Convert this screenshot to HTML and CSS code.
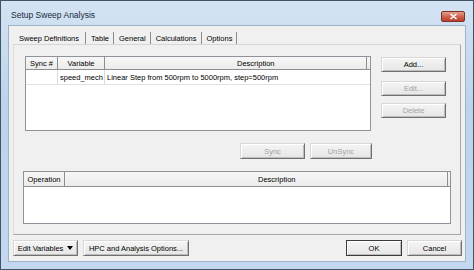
FILE: index.html
```html
<!DOCTYPE html>
<html lang="en">
<head>
  <meta charset="UTF-8" />
  <title>Setup Sweep Analysis</title>
  <link rel="stylesheet" href="styles.css">
</head>
<body>
  <div class="window">
    <div class="titlebar">
      <span class="title">Setup Sweep Analysis</span>
      <span class="close">
        <svg width="9" height="7" viewBox="0 0 9 7">
          <path d="M1.5 1 L7.5 6 M7.5 1 L1.5 6" stroke="#fff" stroke-width="1.6" />
        </svg>
      </span>
    </div>

    <div class="client">
      <div class="tabs">
        <span class="tab active">Sweep Definitions</span>
        <span class="tab">Table</span>
        <span class="tab">General</span>
        <span class="tab">Calculations</span>
        <span class="tab">Options</span>
      </div>

      <div class="panel">
        <div class="upper">
          <div class="upper-left">
            <div class="list sweeps">
              <div class="row head">
                <span class="cell c-sync">Sync #</span>
                <span class="cell c-var">Variable</span>
                <span class="cell c-desc">Description</span>
                <span class="cell c-stub"></span>
              </div>
              <div class="row">
                <span class="cell c-sync"></span>
                <span class="cell c-var">speed_mech</span>
                <span class="cell c-desc">Linear Step from 500rpm to 5000rpm, step=500rpm</span>
              </div>
            </div>
            <div class="sync-row">
              <button class="btn sync" disabled>Sync</button>
              <button class="btn unsync" disabled>UnSync</button>
            </div>
          </div>
          <div class="side-buttons">
            <button class="btn add">Add...</button>
            <button class="btn edit" disabled>Edit...</button>
            <button class="btn delete" disabled>Delete</button>
          </div>
        </div>

        <div class="list ops">
          <div class="row head">
            <span class="cell c-op">Operation</span>
            <span class="cell c-opdesc">Description</span>
            <span class="cell c-stub"></span>
          </div>
        </div>
      </div>

      <div class="footer">
        <button class="btn edit-vars">Edit Variables <span class="arrow"></span></button>
        <button class="btn hpc">HPC and Analysis Options...</button>
        <span class="spacer"></span>
        <button class="btn ok">OK</button>
        <button class="btn cancel">Cancel</button>
      </div>
    </div>
  </div>
</body>
</html>
```

FILE: styles.css
```css
body {
  margin: 0;
  background: #fff;
  font-family: 'Liberation Sans', Arial, sans-serif;
  font-size: 7.5px;
  color: #000;
}

.window {
  width: 474px;
  height: 270px;
  box-sizing: border-box;
  border: 1px solid #3f5468;
  background: linear-gradient(180deg, #d3e3f3 0%, #bcd3ea 40%, #c3d8ee 100%);
  padding: 0 7px 7px 7px;
  display: flex;
  flex-direction: column;
}

.titlebar {
  height: 24px;
  display: flex;
  align-items: center;
  justify-content: space-between;
  flex-shrink: 0;
}

.title {
  font-size: 8.5px;
  color: #1b2a3c;
  padding-left: 3px;
  margin-top: 3px;
}

.close {
  width: 22px;
  height: 9px;
  margin-top: 7px;
  margin-right: 1px;
  border: 1px solid #7c3126;
  border-radius: 2px;
  background: linear-gradient(180deg, #e6a090 0%, #d0644f 50%, #bd3f2b 100%);
  display: flex;
  align-items: center;
  justify-content: center;
}

.close svg {
  display: block;
}

.client {
  flex: 1;
  background: #f0f0f0;
  border: 1px solid #9fb3c8;
  display: flex;
  flex-direction: column;
}

/* tab strip */
.tabs {
  display: flex;
  margin: 2px 0 0 4px;
  height: 16px;
  flex-shrink: 0;
}

.tab {
  display: flex;
  align-items: center;
  padding: 1px 4px 0 5px;
  border-right: 1px solid #8c8c8c;
  height: 11px;
  margin-top: 4px;
  white-space: nowrap;
}

.tab.active {
  padding-left: 6px;
  padding-right: 6px;
}

.panel {
  flex: 1;
  margin: 0 4px;
  border: 1px solid #a6a6a6;
  border-left-color: #dcdcdc;
  border-top-color: #d6d6d6;
  padding: 11px 0 0 9px;
  display: flex;
  flex-direction: column;
}

.upper {
  display: flex;
  gap: 10px;
}

.upper-left {
  display: flex;
  flex-direction: column;
  align-items: flex-end;
  margin-left: 2px;
}

.side-buttons {
  display: flex;
  flex-direction: column;
  padding-top: 1px;
}

.side-buttons .btn {
  width: 65px;
  height: 15px;
  margin-bottom: 8px;
}

.side-buttons .edit {
  margin-top: 1px;
  margin-bottom: 7px;
}

/* list views */
.list {
  background: #fff;
  border: 1px solid #8f9399;
  box-sizing: border-box;
}

.sweeps {
  width: 346px;
  height: 75px;
}

.ops {
  width: 428px;
  height: 53px;
  margin-top: 12px;
}

.row {
  display: flex;
  height: 14px;
  border-bottom: 1px solid #e2e2e2;
}

.row.head {
  height: 12px;
  background: linear-gradient(180deg, #f7f7f7, #ebebeb);
  border-bottom: 1px solid #8e8e8e;
}

.ops .row.head {
  height: 14px;
}

.cell {
  display: flex;
  align-items: center;
  padding-left: 2px;
  box-sizing: border-box;
  border-right: 1px solid #dadada;
  white-space: nowrap;
  overflow: hidden;
}

.head .cell {
  border-right-color: #8e8e8e;
  justify-content: center;
  padding-left: 0;
}

.c-sync { width: 32px; }
.c-var { width: 47px; }
.c-desc { width: 262px; }
.head .c-desc { justify-content: flex-start; padding-left: 132px; }
.c-stub { flex: 1; border-right: none; }
.row:not(.head) .c-desc { border-right: none; }

.c-op { width: 41px; }
.c-opdesc { width: 383px; }
.head .c-opdesc { justify-content: flex-start; padding-left: 193px; }

.sync-row {
  display: flex;
  gap: 5px;
  margin-top: 12px;
  margin-right: -1px;
}

.sync { width: 65px; height: 16px; }
.unsync { width: 62px; height: 16px; }

/* buttons */
.btn {
  font-family: 'Liberation Sans', Arial, sans-serif;
  font-size: 7.5px;
  color: #000;
  background: linear-gradient(180deg, #f4f4f4, #e6e6e6);
  border: 1px solid;
  border-color: #d8d8d8 #707070 #707070 #d8d8d8;
  box-shadow: inset 1px 1px #fff, inset -1px -1px #bdbdbd;
  padding: 0;
  box-sizing: border-box;
  display: flex;
  align-items: center;
  justify-content: center;
}

.btn:disabled {
  color: #a3a3a3;
}

.footer {
  height: 26px;
  flex-shrink: 0;
  display: flex;
  align-items: center;
  gap: 5px;
  padding: 0 3px 0 4px;
}

.footer .btn {
  height: 16px;
}

.edit-vars {
  width: 65px;
  gap: 4px;
}

.arrow {
  width: 0;
  height: 0;
  border-left: 3.5px solid transparent;
  border-right: 3.5px solid transparent;
  border-top: 4px solid #000;
}

.hpc { width: 106px; }

.spacer { flex: 1; }

.ok {
  width: 56px;
  border-color: #3a3a3a;
}

.cancel { width: 55px; }
```
